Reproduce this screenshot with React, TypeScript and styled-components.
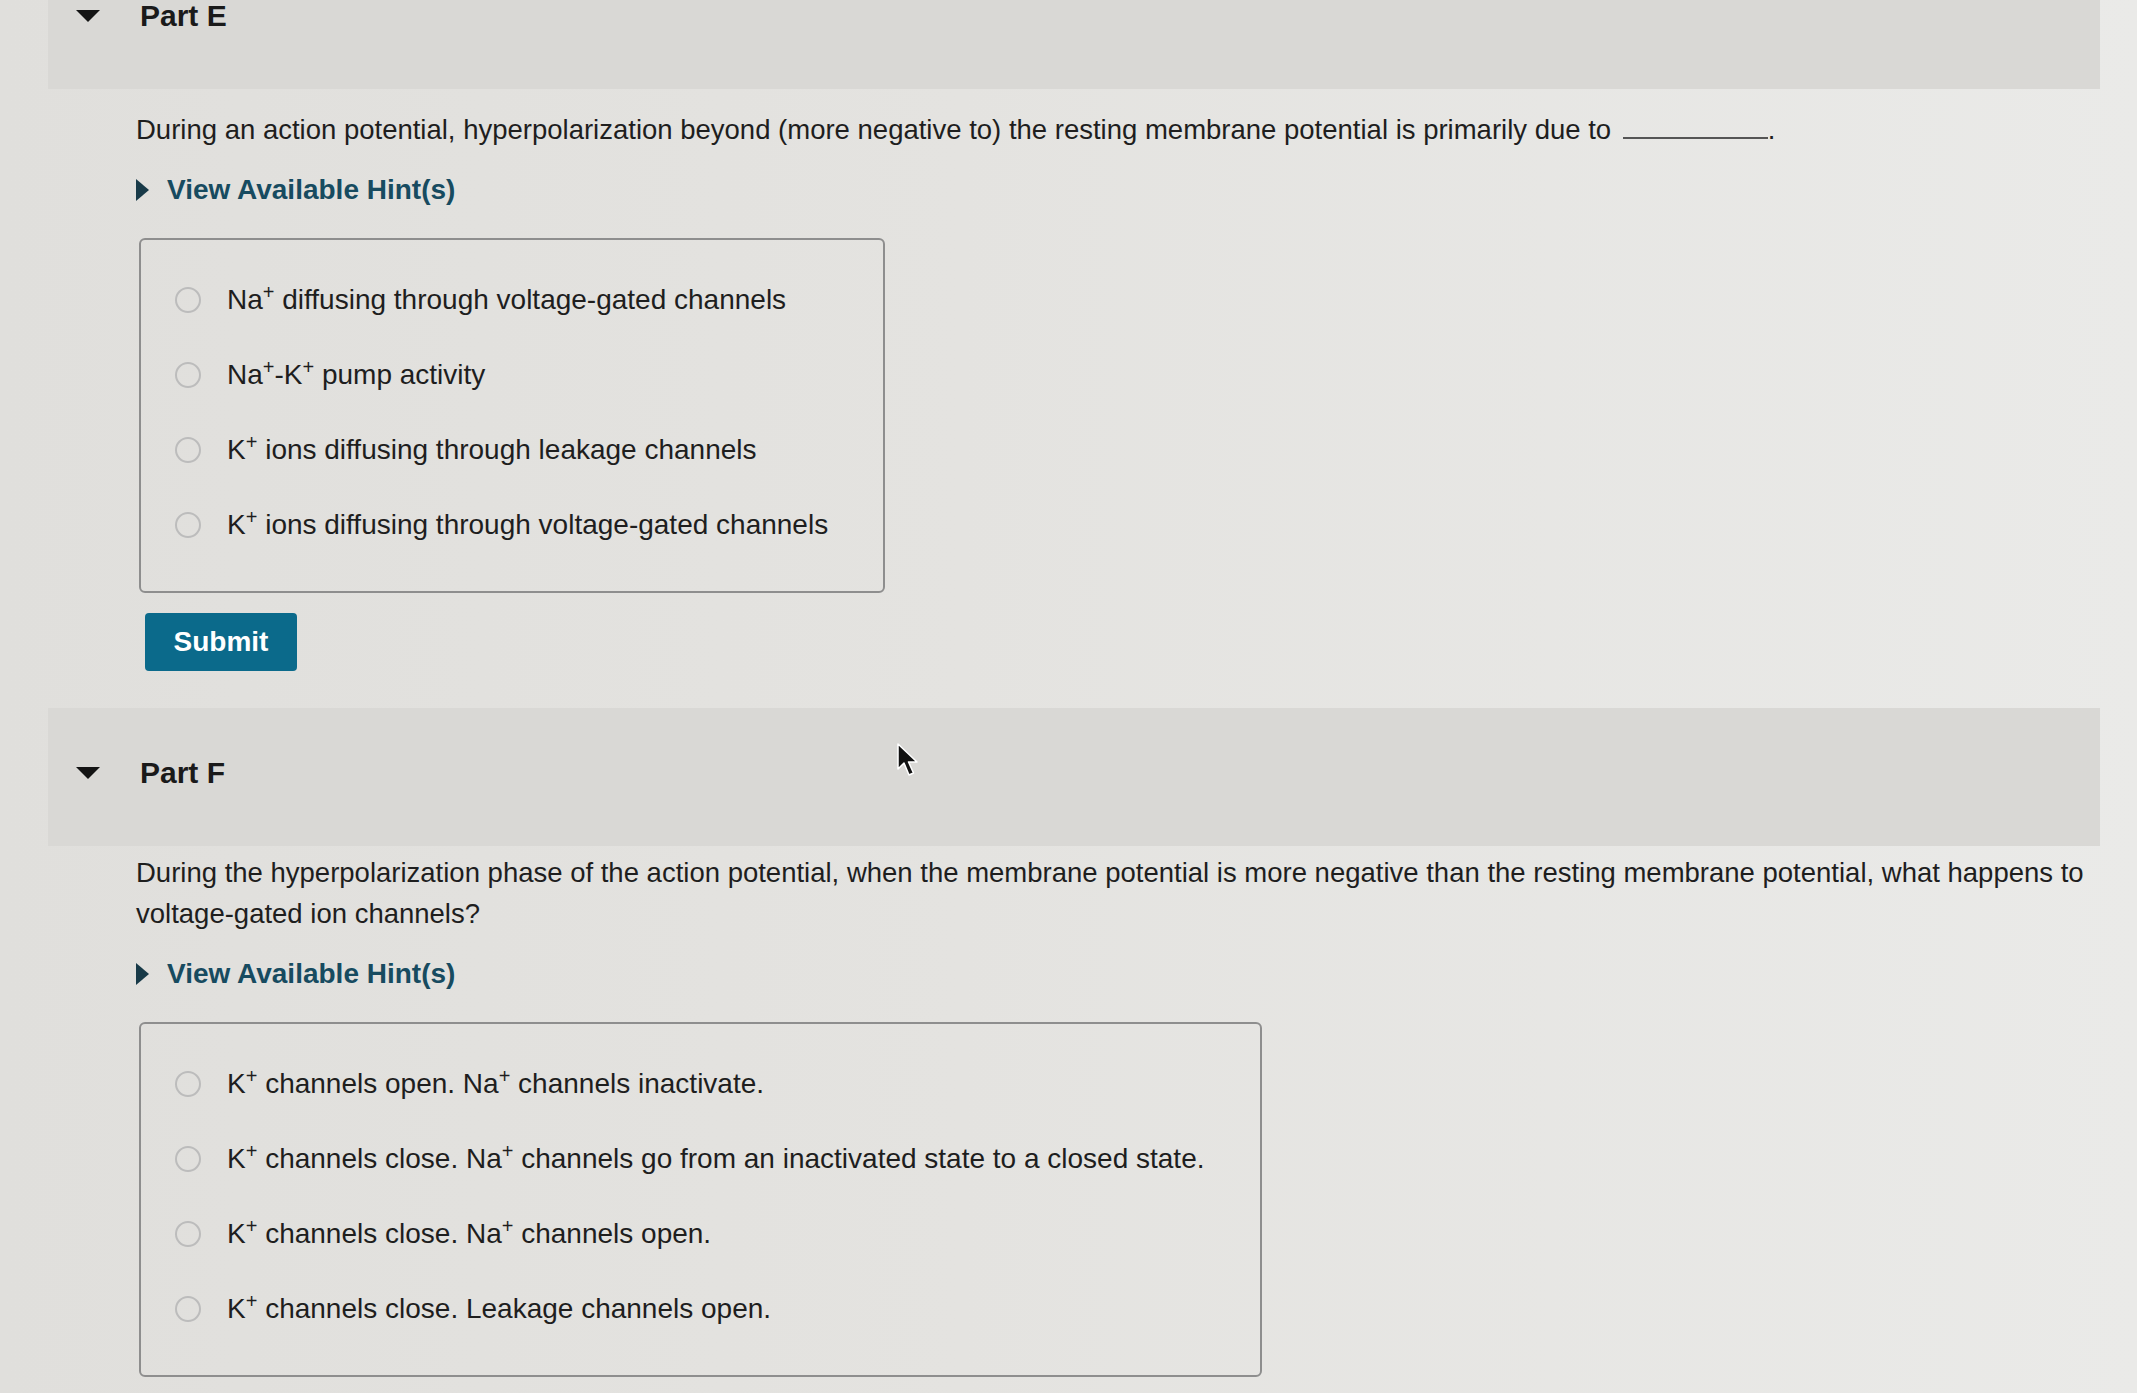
import styled, { createGlobalStyle } from 'styled-components'

const GlobalStyle = createGlobalStyle`
  html, body {
    margin: 0;
    padding: 0;
  }
  body {
    background: linear-gradient(90deg, #e0dfdc 0%, #e4e3e0 45%, #eaeae8 100%);
    font-family: 'Liberation Sans', Arial, sans-serif;
    color: #1c1c1c;
    overflow: hidden;
  }
`

type Choice = { id: string; label: React.ReactNode }

const Plus = () => <Sup>+</Sup>

const partEChoices: Choice[] = [
  { id: 'e1', label: <>Na<Plus /> diffusing through voltage-gated channels</> },
  { id: 'e2', label: <>Na<Plus />-K<Plus /> pump activity</> },
  { id: 'e3', label: <>K<Plus /> ions diffusing through leakage channels</> },
  { id: 'e4', label: <>K<Plus /> ions diffusing through voltage-gated channels</> },
]

const partFChoices: Choice[] = [
  { id: 'f1', label: <>K<Plus /> channels open. Na<Plus /> channels inactivate.</> },
  { id: 'f2', label: <>K<Plus /> channels close. Na<Plus /> channels go from an inactivated state to a closed state.</> },
  { id: 'f3', label: <>K<Plus /> channels close. Na<Plus /> channels open.</> },
  { id: 'f4', label: <>K<Plus /> channels close. Leakage channels open.</> },
]

const ChoiceList = ({ name, choices }: { name: string; choices: Choice[] }) => (
  <ChoiceBox>
    {choices.map((c) => (
      <ChoiceRow key={c.id}>
        <Radio type="radio" name={name} />
        <ChoiceText>{c.label}</ChoiceText>
      </ChoiceRow>
    ))}
  </ChoiceBox>
)

const HintToggle = () => (
  <Hint>
    <HintArrow />
    View Available Hint(s)
  </Hint>
)

const App = () => {
  return (
    <Page>
      <GlobalStyle />

      <Part $first>
        <PartHeader>
          <Caret />
          <PartTitle>Part E</PartTitle>
        </PartHeader>
        <PartBody $top={20}>
          <Question>
            During an action potential, hyperpolarization beyond (more negative to) the resting membrane potential is
            primarily due to <Blank />.
          </Question>
          <HintToggle />
          <ChoiceList name="partE" choices={partEChoices} />
          <SubmitButton>Submit</SubmitButton>
        </PartBody>
      </Part>

      <Part>
        <PartHeader>
          <Caret />
          <PartTitle>Part F</PartTitle>
        </PartHeader>
        <PartBody $top={6}>
          <Question>
            During the hyperpolarization phase of the action potential, when the membrane potential is more negative
            than the resting membrane potential, what happens to voltage-gated ion channels?
          </Question>
          <HintToggle />
          <ChoiceList name="partF" choices={partFChoices} />
        </PartBody>
      </Part>

      <Pointer width="26" height="36" viewBox="0 0 26 36">
        <path d="M2 2 L2 27 L8 21 L13 33 L17.5 31 L12.5 20 L21 20 Z" fill="#111" stroke="#fff" strokeWidth="1.5" strokeLinejoin="round" />
      </Pointer>
    </Page>
  )
}

export default App

const Page = styled.div`
  position: relative;
  width: 2137px;
  height: 1393px;
  padding: 0 37px 0 48px;
  box-sizing: border-box;
  overflow: hidden;
`
const Part = styled.section<{ $first?: boolean }>`
  margin-top: ${(p) => (p.$first ? '-49px' : '37px')};
`
const PartHeader = styled.div`
  display: flex;
  align-items: center;
  gap: 40px;
  height: 138px;
  padding: 0 0 8px 28px;
  box-sizing: border-box;
  background: #d9d8d5;
`
const Caret = styled.span`
  width: 0;
  height: 0;
  border-left: 12px solid transparent;
  border-right: 12px solid transparent;
  border-top: 12px solid #141414;
`
const PartTitle = styled.h2`
  margin: 0;
  font-size: 30px;
  font-weight: 700;
  color: #1a1a1a;
`
const PartBody = styled.div<{ $top: number }>`
  display: flex;
  flex-direction: column;
  align-items: flex-start;
  padding-left: 88px;
  padding-top: ${(p) => p.$top}px;
`
const Question = styled.p`
  margin: 0;
  font-size: 27.5px;
  line-height: 41px;
  color: #1e1e1e;
`
const Blank = styled.span`
  display: inline-block;
  width: 145px;
  margin-left: 4px;
  border-bottom: 2px solid #555;
`
const Hint = styled.button`
  display: flex;
  align-items: center;
  gap: 18px;
  margin-top: 24px;
  padding: 0;
  border: none;
  background: none;
  font-family: inherit;
  font-size: 28px;
  font-weight: 700;
  color: #174b60;
  cursor: pointer;
`
const HintArrow = styled.span`
  width: 0;
  height: 0;
  border-top: 11px solid transparent;
  border-bottom: 11px solid transparent;
  border-left: 13px solid #183a48;
`
const ChoiceBox = styled.div`
  display: flex;
  flex-direction: column;
  gap: 31px;
  margin-top: 32px;
  margin-left: 3px;
  padding: 38px 55px 44px 34px;
  border: 2px solid #8e8e8e;
  border-radius: 6px;
`
const ChoiceRow = styled.label`
  display: flex;
  align-items: center;
  gap: 26px;
  height: 44px;
`
const Radio = styled.input`
  appearance: none;
  width: 26px;
  height: 26px;
  margin: 0;
  border: 2px solid #bcbcbc;
  border-radius: 50%;
  background: transparent;
`
const ChoiceText = styled.span`
  font-size: 28px;
  color: #1e1e1e;
`
const Sup = styled.sup`
  font-size: 20px;
  line-height: 0;
  vertical-align: 0.5em;
`
const SubmitButton = styled.button`
  margin-top: 20px;
  margin-left: 9px;
  width: 152px;
  height: 58px;
  border: none;
  border-radius: 4px;
  background: #0b6a8b;
  color: #fff;
  font-family: inherit;
  font-size: 28px;
  font-weight: 700;
  cursor: pointer;
`
const Pointer = styled.svg`
  position: absolute;
  left: 896px;
  top: 742px;
`
